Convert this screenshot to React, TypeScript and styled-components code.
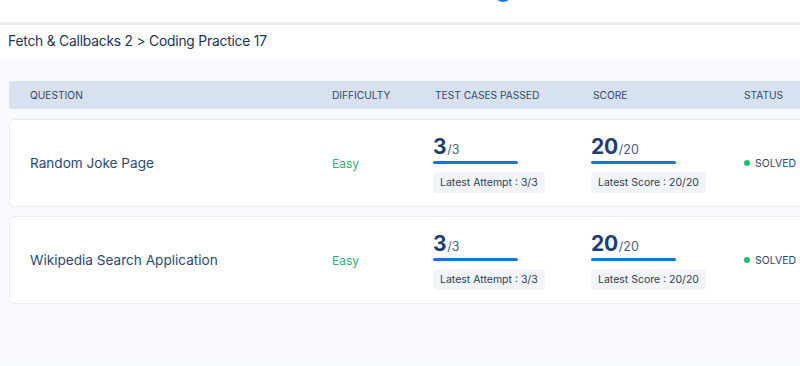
import React from "react";
import styled, { createGlobalStyle } from "styled-components";

const GlobalStyle = createGlobalStyle`
  html, body {
    margin: 0;
    padding: 0;
    background: #f8fafd;
    overflow: hidden;
  }
  body {
    font-family: Inter, "Noto Sans", sans-serif;
  }
`;

const Page = styled.div`
  width: 800px;
  height: 366px;
  display: flex;
  flex-direction: column;
  overflow: hidden;
`;

const TopBar = styled.div`
  height: 22px;
  background: #ffffff;
  border-bottom: 3px solid #e9ebef;
  display: flex;
  padding-left: 494px;
  overflow: hidden;
`;

const Spinner = styled.div`
  width: 18px;
  height: 18px;
  border-radius: 50%;
  background: #1a73e8;
  margin-top: -16px;
`;

const Breadcrumb = styled.div`
  height: 32px;
  background: #ffffff;
  display: flex;
  align-items: center;
  padding-left: 8px;
  font-size: 13.8px;
  color: #1d3456;
  letter-spacing: -0.2px;
`;

const Content = styled.div`
  flex: 1;
  padding: 24px 0 0 9px;
  display: flex;
  flex-direction: column;
  gap: 9px;
  width: 830px;
`;

const grid = `
  display: grid;
  grid-template-columns: 302px 103px 158px 151px 1fr;
  padding-left: 20px;
  align-items: center;
`;

const HeaderRow = styled.div`
  ${grid}
  height: 28px;
  background: #d8e1ef;
  border-radius: 3px;
  font-size: 10.2px;
  color: #324a6d;
  text-transform: uppercase;
  margin-bottom: 1px;
  padding-left: 21px;
`;

const Row = styled.div`
  ${grid}
  height: 86px;
  background: #ffffff;
  border: 1px solid #e6ecf4;
  border-radius: 6px;
`;

const Title = styled.div`
  font-size: 13.6px;
  color: #2b4873;
`;

const Difficulty = styled.div`
  font-size: 12px;
  color: #2fb574;
`;

const Metric = styled.div`
  display: flex;
  flex-direction: column;
  align-items: flex-start;
  margin-left: -2px;
`;

const Value = styled.div`
  display: flex;
  align-items: baseline;
  color: #1d3d73;
  height: 24px;
`;

const Big = styled.span`
  font-size: 21px;
  font-weight: 700;
  letter-spacing: -0.3px;
`;

const Small = styled.span`
  font-size: 12.5px;
  color: #4a5d7a;
  margin-left: 1px;
`;

const Bar = styled.div`
  width: 85px;
  height: 3px;
  border-radius: 2px;
  background: #1a75d8;
  margin-top: 3px;
`;

const Badge = styled.div`
  margin-top: 8px;
  height: 21px;
  padding: 0 7px;
  display: flex;
  align-items: center;
  background: #f1f4f9;
  border-radius: 4px;
  font-size: 10.5px;
  color: #2f3e55;
`;

const Status = styled.div`
  display: flex;
  align-items: center;
  gap: 5px;
  font-size: 10.5px;
  color: #2f466a;
`;

const Dot = styled.span`
  width: 6px;
  height: 6px;
  border-radius: 50%;
  background: #1fbf6c;
`;

const Footer = styled.div`
  height: 8px;
  background: #f6faff;
`;

const questions = [
  { title: "Random Joke Page", difficulty: "Easy" },
  { title: "Wikipedia Search Application", difficulty: "Easy" },
];

function App(): JSX.Element {
  return (
    <Page>
      <GlobalStyle />
      <TopBar>
        <Spinner />
      </TopBar>
      <Breadcrumb>Fetch &amp; Callbacks 2 &gt; Coding Practice 17</Breadcrumb>
      <Content>
        <HeaderRow>
          <div>Question</div>
          <div>Difficulty</div>
          <div>Test Cases Passed</div>
          <div>Score</div>
          <div>Status</div>
        </HeaderRow>
        {questions.map((q) => (
          <Row key={q.title}>
            <Title>{q.title}</Title>
            <Difficulty>{q.difficulty}</Difficulty>
            <Metric>
              <Value>
                <Big>3</Big>
                <Small>/3</Small>
              </Value>
              <Bar />
              <Badge>Latest Attempt : 3/3</Badge>
            </Metric>
            <Metric>
              <Value>
                <Big>20</Big>
                <Small>/20</Small>
              </Value>
              <Bar />
              <Badge>Latest Score : 20/20</Badge>
            </Metric>
            <Status>
              <Dot />
              SOLVED
            </Status>
          </Row>
        ))}
      </Content>
      <Footer />
    </Page>
  );
}

export default App;
